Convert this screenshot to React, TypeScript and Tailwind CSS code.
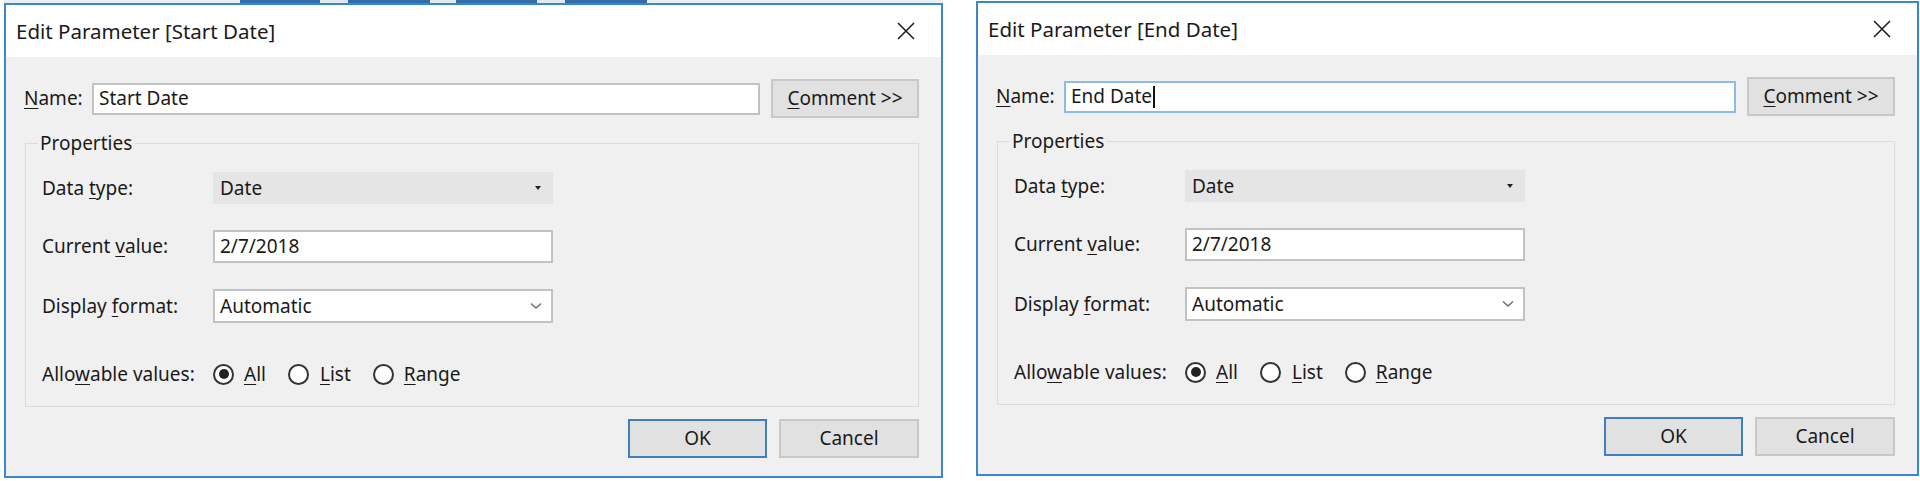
import React from "react";

function CloseIcon() {
  return (
    <svg width="18" height="18" viewBox="0 0 18 18" fill="none">
      <path d="M1 1 L17 17 M17 1 L1 17" stroke="#1f1f1f" strokeWidth="1.6" />
    </svg>
  );
}

function Radio({ checked }: { checked?: boolean }) {
  return (
    <span className="flex h-[21px] w-[21px] items-center justify-center rounded-full border-2 border-[#333333] bg-white">
      {checked ? <span className="h-[10px] w-[10px] rounded-full bg-[#222222]" /> : null}
    </span>
  );
}

function Dialog({
  title,
  name,
  focused,
  className,
}: {
  title: string;
  name: string;
  focused?: boolean;
  className: string;
}) {
  return (
    <div className={"flex flex-col border-2 border-[#3d86c9] bg-[#f0f0f0] " + className}>
      <div className="flex h-[52px] items-center justify-between bg-white pl-[10px] pr-[26px]">
        <span className="text-[20.5px] text-[#1a1a1a]">{title}</span>
        <CloseIcon />
      </div>
      <div className="flex flex-col pl-[18px] pr-[22px] pt-[22px] pb-[18px]">
        <div className="flex h-[39px] items-center">
          <span className="w-[68px]">
            <u className="underline-offset-[3px]">N</u>ame:
          </span>
          <div
            className={
              "flex h-[32px] flex-1 items-center bg-white px-[5px] " +
              (focused ? "border-2 border-[#8cbce6]" : "border-2 border-[#c2c2c2]")
            }
          >
            <span>{name}</span>
            {focused ? <span className="ml-[1px] h-[22px] w-[1.5px] bg-[#111111]" /> : null}
          </div>
          <button className="ml-[11px] flex h-[39px] w-[148px] items-center justify-center border-2 border-[#c8c8c8] bg-[#e1e1e1] text-[#1a1a1a]">
            <span>
              <u className="underline-offset-[3px]">C</u>omment &gt;&gt;
            </span>
          </button>
        </div>
        <fieldset className="mt-[12px] ml-[1px] border border-[#dcdcdc] pl-[16px] pt-[15px] pb-[15px]">
          <legend className="ml-[-4px] px-[2px] leading-[26px]">Properties</legend>
          <div className="flex h-[34px] items-center">
            <span className="w-[171px]">
              Data <u className="underline-offset-[3px]">t</u>ype:
            </span>
            <div className="flex h-[32px] w-[340px] items-center justify-between bg-[#e5e5e5] pl-[7px] pr-[12px]">
              <span>Date</span>
              <svg width="6" height="4" viewBox="0 0 6 4">
                <path d="M0 0 L6 0 L3 4 Z" fill="#222222" />
              </svg>
            </div>
          </div>
          <div className="mt-[24px] flex h-[34px] items-center">
            <span className="w-[171px]">
              Current <u className="underline-offset-[3px]">v</u>alue:
            </span>
            <div className="flex h-[33px] w-[340px] items-center border-2 border-[#c2c2c2] bg-white px-[5px]">
              <span>2/7/2018</span>
            </div>
          </div>
          <div className="mt-[26px] flex h-[34px] items-center">
            <span className="w-[171px]">
              Display <u className="underline-offset-[3px]">f</u>ormat:
            </span>
            <div className="flex h-[34px] w-[340px] items-center justify-between border-2 border-[#c2c2c2] bg-white pl-[5px] pr-[9px]">
              <span>Automatic</span>
              <svg width="12" height="8" viewBox="0 0 12 8" fill="none">
                <path d="M1 1.5 L6 6 L11 1.5" stroke="#6b6b6b" strokeWidth="1.4" />
              </svg>
            </div>
          </div>
          <div className="mt-[34px] flex h-[34px] items-center">
            <span className="w-[171px]">
              Allo<u className="underline-offset-[3px]">w</u>able values:
            </span>
            <div className="flex items-center gap-[22px]">
              <label className="flex items-center gap-[10px]">
                <Radio checked />
                <span>
                  <u className="underline-offset-[3px]">A</u>ll
                </span>
              </label>
              <label className="flex items-center gap-[11px]">
                <Radio />
                <span>
                  <u className="underline-offset-[3px]">L</u>ist
                </span>
              </label>
              <label className="flex items-center gap-[10px]">
                <Radio />
                <span>
                  <u className="underline-offset-[3px]">R</u>ange
                </span>
              </label>
            </div>
          </div>
        </fieldset>
        <div className="mt-[12px] flex justify-end gap-[12px]">
          <button className="flex h-[39px] w-[139px] items-center justify-center border-2 border-[#3f7fbb] bg-[#e1e1e1] text-[#1a1a1a]">
            OK
          </button>
          <button className="flex h-[39px] w-[140px] items-center justify-center border-2 border-[#c8c8c8] bg-[#e1e1e1] text-[#1a1a1a]">
            Cancel
          </button>
        </div>
      </div>
    </div>
  );
}

export default function App() {
  return (
    <div className="flex h-[481px] w-[1920px] overflow-hidden bg-white font-['Noto_Sans',sans-serif] text-[19px] text-[#1a1a1a]">
      <div className="ml-[4px] flex flex-col">
        <div className="flex h-[3px] w-[939px]">
          <div className="w-[236px] bg-[#e8eef4]" />
          <div className="w-[80px] bg-[#2f6ea8]" />
          <div className="w-[28px] bg-[#dfe8f0]" />
          <div className="w-[82px] bg-[#2f6ea8]" />
          <div className="w-[26px] bg-[#dfe8f0]" />
          <div className="w-[81px] bg-[#2f6ea8]" />
          <div className="w-[28px] bg-[#dfe8f0]" />
          <div className="w-[82px] bg-[#2f6ea8]" />
          <div className="flex-1 bg-[#e8eef4]" />
        </div>
        <Dialog title="Edit Parameter [Start Date]" name="Start Date" className="w-[939px]" />
      </div>
      <div className="ml-[33px] mt-[1px] flex flex-col">
        <Dialog title="Edit Parameter [End Date]" name="End Date" focused className="w-[943px]" />
      </div>
    </div>
  );
}
